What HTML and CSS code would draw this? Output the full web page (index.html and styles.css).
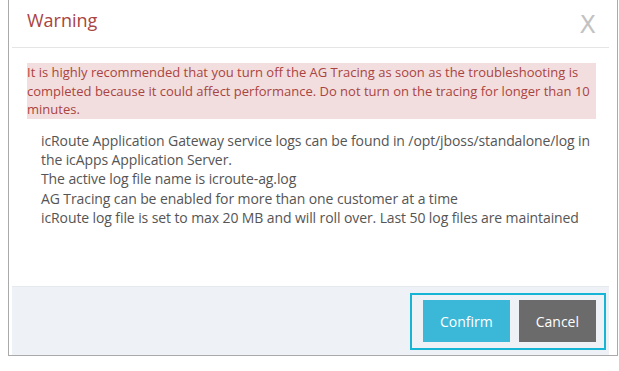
FILE: index.html
```html
<!DOCTYPE html>
<html lang="en">
<head>
    <meta charset="UTF-8">
    <title>Warning</title>
    <link rel="stylesheet" href="styles.css">
</head>
<body>

<div class="frame">
    <div class="dialog">
        <div class="dialog-header">
            <h4 class="dialog-title">Warning</h4>
            <span class="close">X</span>
        </div>

        <div class="dialog-body">
            <div class="alert">It is highly recommended that you turn off the AG Tracing as soon as the troubleshooting is completed because it could affect performance. Do not turn on the tracing for longer than 10 minutes.</div>
            <ul class="notes">
                <li>icRoute Application Gateway service logs can be found in /opt/jboss/standalone/log in the icApps Application Server.</li>
                <li>The active log file name is icroute-ag.log</li>
                <li>AG Tracing can be enabled for more than one customer at a time</li>
                <li>icRoute log file is set to max 20 MB and will roll over. Last 50 log files are maintained</li>
            </ul>
        </div>

        <div class="dialog-footer">
            <div class="actions">
                <button class="btn btn-confirm">Confirm</button>
                <button class="btn btn-cancel">Cancel</button>
            </div>
        </div>
    </div>
</div>

</body>
</html>
```

FILE: styles.css
```css
body {
    margin: 0;
    font-family: "Open Sans", "Liberation Sans", sans-serif;
    background: #fff;
}
.frame {
    width: 608px;
    margin-left: 8px;
    border: 1px solid #aaa;
    border-top: none;
}
.dialog {
    margin: 0 8px 0 3px;
}
.dialog-header {
    display: flex;
    justify-content: space-between;
    align-items: flex-start;
    height: 26px;
    padding: 7px 13px 14px 15px;
    border-bottom: 1px solid #e5e5e5;
}
.dialog-title {
    margin: 0;
    font-size: 18px;
    font-weight: normal;
    line-height: 26px;
    color: #a94442;
}
.close {
    margin-top: 5px;
    font-family: "DejaVu Sans", sans-serif;
    font-size: 24px;
    line-height: 26px;
    color: #c2c2c2;
}
.dialog-body {
    box-sizing: border-box;
    min-height: 238px;
    padding: 15px 13px 15px 15px;
}
.alert {
    background: #f2dede;
    color: #a94442;
    font-size: 13px;
    line-height: 18.6px;
}
.notes {
    list-style: none;
    margin: 12px 0 0 14px;
    padding: 0;
    font-size: 14px;
    line-height: 19.3px;
    letter-spacing: -0.1px;
    color: #555;
}
.dialog-footer {
    display: flex;
    justify-content: flex-end;
    padding: 6px 3px 5px 0;
    background: #eef1f6;
    border-top: 1px solid #e5e8ec;
}
.actions {
    display: flex;
    gap: 9px;
    padding: 5px 8px 6px 11px;
    border: 2px solid #17b5d5;
}
.btn {
    height: 42px;
    padding: 0 17px;
    border: none;
    border-radius: 0;
    font-family: "Open Sans", sans-serif;
    font-size: 14px;
    color: #fff;
}
.btn-confirm { background: #3bb8d8; }
.btn-cancel { background: #6b6b6c; }
```
